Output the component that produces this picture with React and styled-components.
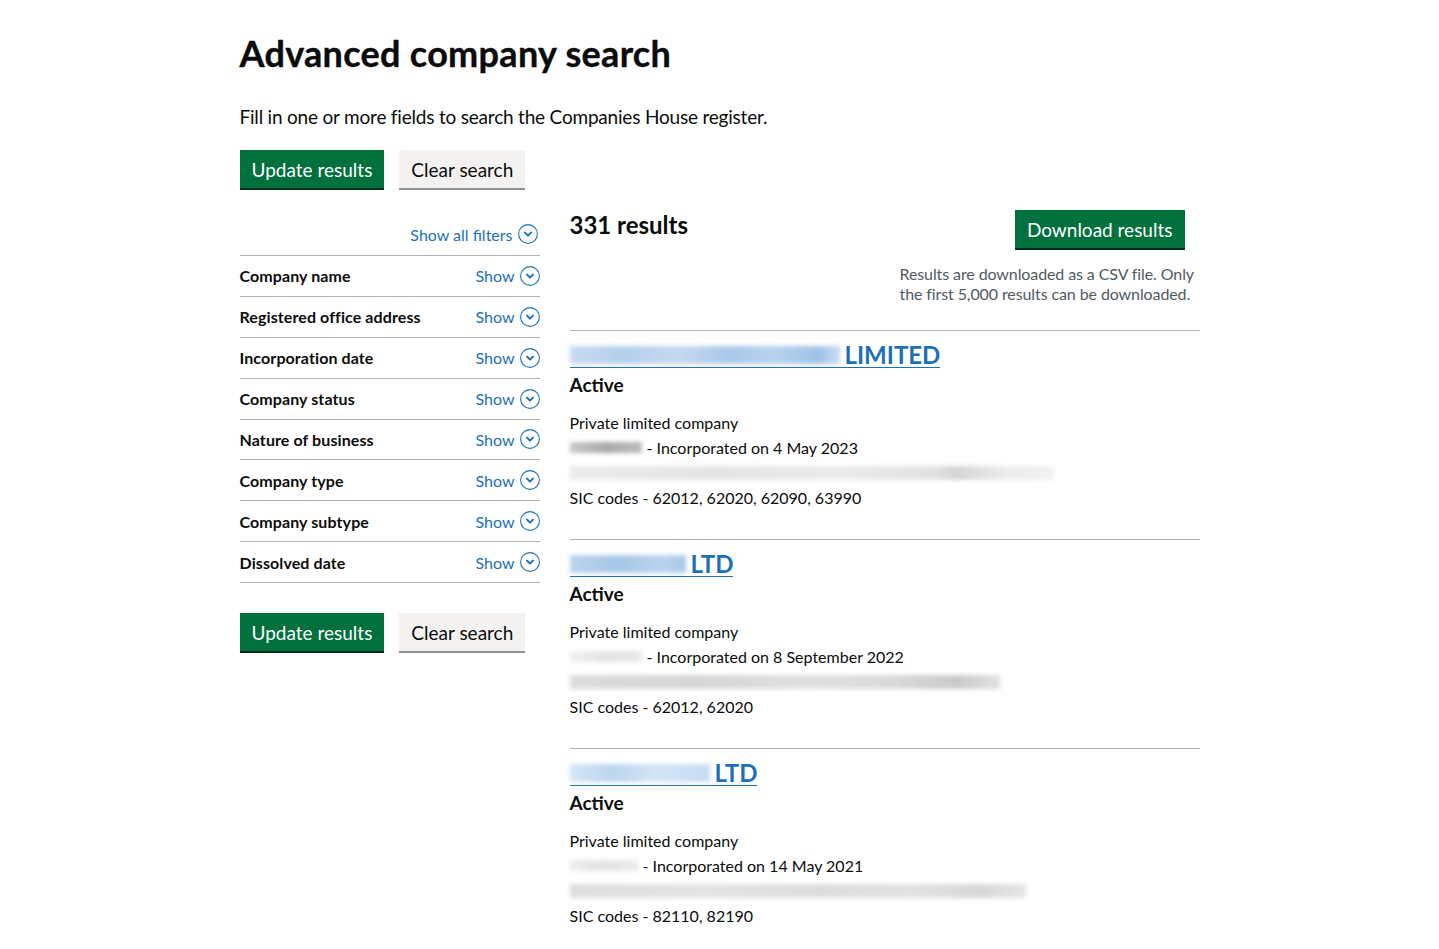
import React from "react";
import styled, { createGlobalStyle } from "styled-components";

const GlobalStyle = createGlobalStyle`
  html, body { margin: 0; padding: 0; background: #fff; }
  body {
    font-family: Lato, "Liberation Sans", Arial, sans-serif;
    color: #0b0c0c;
    -webkit-font-smoothing: antialiased;
  }
  * { box-sizing: border-box; }
`;

const Page = styled.main`
  max-width: 960px;
  margin: 0 auto;
  padding-top: 33px;
  padding-bottom: 40px;
`;

const Title = styled.h1`
  margin: 0;
  font-size: 36px;
  line-height: 40px;
  font-weight: 700;
  letter-spacing: 0.3px;
  -webkit-text-stroke: 0.4px #0b0c0c;
`;

const Lead = styled.p`
  margin: 31px 0 0;
  font-size: 19px;
  line-height: 25px;
  letter-spacing: -0.2px;
`;

const ButtonRow = styled.div`
  display: flex;
  gap: 15px;
  margin-top: ${(p) => p.$top || 0}px;
`;

const Button = styled.button`
  font-family: inherit;
  font-size: 19px;
  height: 38px;
  padding: 0 12px;
  border: 0;
  border-radius: 0;
  cursor: pointer;
  display: inline-flex;
  align-items: center;
  margin-right: ${(p) => p.$inset || 0}px;
  background: ${(p) => (p.$secondary ? "#f3f2f1" : "#00703c")};
  color: ${(p) => (p.$secondary ? "#0b0c0c" : "#fff")};
  box-shadow: 0 2px 0 ${(p) => (p.$secondary ? "#929191" : "#002d18")};
`;

const Columns = styled.div`
  display: grid;
  grid-template-columns: 300px 630px;
  column-gap: 30px;
  margin-top: 22px;
`;

const Sidebar = styled.aside``;

const ShowAllRow = styled.div`
  display: flex;
  justify-content: flex-end;
  align-items: center;
  height: 45px;
  padding: 13px 2px 10px 0;
`;

const ToggleLink = styled.a`
  display: inline-flex;
  align-items: center;
  gap: 5px;
  color: #1d70b8;
  font-size: 16px;
  text-decoration: none;
  cursor: pointer;
`;

const FilterList = styled.div`
  border-bottom: 1px solid #b1b4b6;
`;

const FilterRow = styled.div`
  display: flex;
  justify-content: space-between;
  align-items: center;
  height: 40.875px;
  border-top: 1px solid #b1b4b6;
`;

const FilterLabel = styled.span`
  font-size: 16px;
  font-weight: 700;
  letter-spacing: 0.1px;
`;

const Results = styled.section``;

const ResultsHeader = styled.div`
  display: flex;
  justify-content: space-between;
  align-items: flex-start;
  padding-bottom: 26px;
  border-bottom: 1px solid #b1b4b6;
`;

const Count = styled.h2`
  margin: 0;
  font-size: 24px;
  line-height: 30px;
  font-weight: 700;
`;

const DownloadBox = styled.div`
  width: 300px;
  display: flex;
  flex-direction: column;
  align-items: flex-end;
  gap: 16px;
`;

const DownloadNote = styled.p`
  margin: 0;
  align-self: stretch;
  font-size: 16px;
  line-height: 20px;
  letter-spacing: -0.1px;
  color: #505a5f;
`;

const Result = styled.article`
  padding: 12px 0 29px;
  border-bottom: 1px solid #b1b4b6;
  &:last-child { border-bottom: 0; }
`;

const ResultTitle = styled.h3`
  margin: 0;
  display: flex;
`;

const TitleLink = styled.a`
  display: inline-flex;
  align-items: center;
  gap: 5px;
  font-size: 24px;
  line-height: 24px;
  font-weight: 700;
  color: #1d70b8;
  text-decoration: none;
  border-bottom: 1px solid #1d70b8;
  cursor: pointer;
`;

const Redacted = styled.span`
  display: inline-block;
  height: ${(p) => p.$h}px;
  width: ${(p) => p.$w}px;
  filter: blur(2px);
  background: ${(p) => p.$bg};
`;

const Status = styled.p`
  margin: 4px 0 13px;
  font-size: 19px;
  line-height: 25px;
  font-weight: 700;
`;

const Detail = styled.p`
  margin: 0;
  display: flex;
  align-items: center;
  gap: 5px;
  height: 25px;
  font-size: 16px;
  line-height: 25px;
`;

const Chevron = () => (
  <svg width="20" height="20" viewBox="0 0 20 20" aria-hidden="true">
    <circle cx="10" cy="10" r="9.4" fill="none" stroke="#1d70b8" strokeWidth="1.1" />
    <path d="M7 8.6l3 3 3-3" fill="none" stroke="#1d70b8" strokeWidth="2" strokeLinecap="round" strokeLinejoin="round" />
  </svg>
);

const filters = [
  "Company name",
  "Registered office address",
  "Incorporation date",
  "Company status",
  "Nature of business",
  "Company type",
  "Company subtype",
  "Dissolved date",
];

const BLUE1 =
  "linear-gradient(90deg, #c6dbf1 0%, #b4cfec 20%, #c3d9f0 40%, #a9c8ea 60%, #b9d3ee 75%, #9fc1e7 92%, #c9ddf2 100%)";
const BLUE2 = "linear-gradient(90deg, #bcd5ef 0%, #a7c7e9 40%, #b9d3ee 80%, #aac9ea 100%)";
const BLUE3 = "linear-gradient(90deg, #d6e6f5 0%, #bcd5ef 30%, #d3e4f5 60%, #c8dcf2 100%)";

const results = [
  {
    blur: 270,
    blurBg: BLUE1,
    suffix: "LIMITED",
    date: "4 May 2023",
    numW: 72,
    numBg: "linear-gradient(90deg, #c9c9c9, #a9a9a9 50%, #bdbdbd)",
    addrW: 484,
    addrBg:
      "linear-gradient(90deg, #ececec 0%, #e4e4e4 30%, #ebebeb 55%, #e2e2e2 75%, #d5d5d5 80%, #ececec 90%, #f1f1f1 100%)",
    sic: "62012, 62020, 62090, 63990",
  },
  {
    blur: 116,
    blurBg: BLUE2,
    suffix: "LTD",
    date: "8 September 2022",
    numW: 72,
    numBg: "linear-gradient(90deg, #f0f0f0, #e3e3e3 50%, #e8e8e8)",
    addrW: 430,
    addrBg:
      "linear-gradient(90deg, #dcdcdc 0%, #d6d6d6 30%, #e0e0e0 55%, #dadada 75%, #c9c9c9 90%, #e2e2e2 100%)",
    sic: "62012, 62020",
  },
  {
    blur: 140,
    blurBg: BLUE3,
    suffix: "LTD",
    date: "14 May 2021",
    numW: 68,
    numBg: "linear-gradient(90deg, #eeeeee, #e2e2e2 50%, #ececec)",
    addrW: 456,
    addrBg:
      "linear-gradient(90deg, #dedede 0%, #e4e4e4 30%, #dcdcdc 55%, #e2e2e2 75%, #d7d7d7 90%, #e6e6e6 100%)",
    sic: "82110, 82190",
  },
];

export default function App() {
  return (
    <>
      <GlobalStyle />
      <Page>
        <Title>Advanced company search</Title>
        <Lead>Fill in one or more fields to search the Companies House register.</Lead>
        <ButtonRow $top={21}>
          <Button>Update results</Button>
          <Button $secondary>Clear search</Button>
        </ButtonRow>

        <Columns>
          <Sidebar>
            <ShowAllRow>
              <ToggleLink>
                Show all filters <Chevron />
              </ToggleLink>
            </ShowAllRow>
            <FilterList>
              {filters.map((f) => (
                <FilterRow key={f}>
                  <FilterLabel>{f}</FilterLabel>
                  <ToggleLink>
                    Show <Chevron />
                  </ToggleLink>
                </FilterRow>
              ))}
            </FilterList>
            <ButtonRow $top={30}>
              <Button>Update results</Button>
              <Button $secondary>Clear search</Button>
            </ButtonRow>
          </Sidebar>

          <Results>
            <ResultsHeader>
              <Count>331 results</Count>
              <DownloadBox>
                <Button $inset={15}>Download results</Button>
                <DownloadNote>
                  Results are downloaded as a CSV file. Only the first 5,000 results can be downloaded.
                </DownloadNote>
              </DownloadBox>
            </ResultsHeader>

            {results.map((r, i) => (
              <Result key={i}>
                <ResultTitle>
                  <TitleLink>
                    <Redacted $w={r.blur} $h={18} $bg={r.blurBg} />
                    {r.suffix}
                  </TitleLink>
                </ResultTitle>
                <Status>Active</Status>
                <Detail>Private limited company</Detail>
                <Detail>
                  <Redacted $w={r.numW} $h={11} $bg={r.numBg} />- Incorporated on {r.date}
                </Detail>
                <Detail>
                  <Redacted $w={r.addrW} $h={14} $bg={r.addrBg} />
                </Detail>
                <Detail>SIC codes - {r.sic}</Detail>
              </Result>
            ))}
          </Results>
        </Columns>
      </Page>
    </>
  );
}
